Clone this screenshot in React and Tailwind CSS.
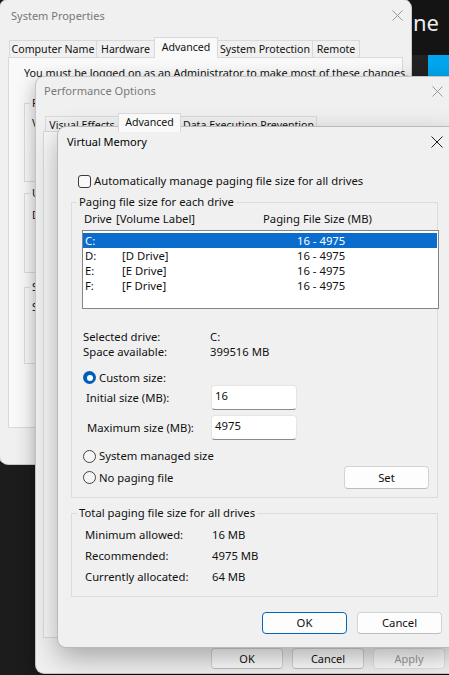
import React from "react";

const XIcon = ({ color = "#000", size = 12, sw = 1 }) => (
  <svg width={size} height={size} viewBox="0 0 12 12" className="shrink-0">
    <path d="M0.5 0.5 L11.5 11.5 M11.5 0.5 L0.5 11.5" stroke={color} strokeWidth={sw} fill="none" />
  </svg>
);

const Radio = ({ checked }) =>
  checked ? (
    <span className="w-[13px] h-[13px] rounded-full bg-[#005fb8] flex items-center justify-center shrink-0">
      <span className="w-[6px] h-[6px] rounded-full bg-white" />
    </span>
  ) : (
    <span className="w-[13px] h-[13px] rounded-full border border-[#444] bg-[#f5f5f5] shrink-0" />
  );

const Btn = ({ children, w = "w-[85px]", h = "h-[22px]", primary, disabled }) => {
  const cls = primary
    ? "border-[#0067c0]"
    : disabled
    ? "border-[#e2e2e2] text-[#9a9a9a] bg-[#f3f3f3]"
    : "border-[#d3d3d3] border-b-[#bdbdbd]";
  return (
    <div className={`${w} ${h} flex items-center justify-center rounded-[4px] border bg-[#fdfdfd] ${cls}`}>
      {children}
    </div>
  );
};

function SystemProperties() {
  const tabs = [
    ["Computer Name", "w-[88px]"],
    ["Hardware", "w-[59px]"],
    ["Advanced", "w-[64px]", true],
    ["System Protection", "w-[96px]"],
    ["Remote", "w-[48px]"],
  ];
  return (
    <div className="absolute left-0 top-0 w-[411px] h-[464px] bg-[#f0f0f0] rounded-[8px] shadow-[0_0_0_1px_#c9c9c9] overflow-hidden text-[10.8px]">
      <div className="h-[31px] flex items-center justify-between pl-[11px] pr-[8px] text-[#777]">
        <span className="text-[11px]">System Properties</span>
        <XIcon color="#8f8f8f" size={11} />
      </div>
      <div className="h-[26px] flex items-end pl-[10px] text-[10.6px]">
        {tabs.map(([t, w, sel]) =>
          sel ? (
            <div
              key={t}
              className={`${w} h-[21px] -ml-px -mb-px relative z-10 flex justify-center pt-[1px] border border-b-0 border-[#d9d9d9] bg-[#f9f9f9]`}
            >
              {t}
            </div>
          ) : (
            <div
              key={t}
              className={`${w} h-[17px] -ml-px flex justify-center items-start border border-b-0 border-[#d9d9d9] bg-[#f0f0f0] leading-[16px]`}
            >
              {t}
            </div>
          )
        )}
      </div>
      <div className="ml-[8px] w-[395px] h-[371px] border border-[#d9d9d9] bg-[#f9f9f9] pl-[15px] pt-[7px]">
        <div>You must be logged on as an Administrator to make most of these changes.</div>
        <fieldset className="mt-[14px] w-[364px] border border-[#dcdcdc] min-w-0">
          <legend className="ml-[5px] px-[2px]">Performance</legend>
          <div className="h-[70px] pl-[7px] pt-[4px]">Visual effects, processor scheduling, memory usage, and virtual memory</div>
        </fieldset>
        <fieldset className="mt-[3px] w-[364px] border border-[#dcdcdc] min-w-0">
          <legend className="ml-[5px] px-[2px]">User Profiles</legend>
          <div className="h-[71px] pl-[7px] pt-[6px]">Desktop settings related to your sign-in</div>
        </fieldset>
        <fieldset className="mt-[6px] w-[364px] border border-[#dcdcdc] min-w-0">
          <legend className="ml-[5px] px-[2px]">Startup and Recovery</legend>
          <div className="h-[68px] pl-[7px] pt-[4px]">System startup, system failure, and debugging information</div>
        </fieldset>
      </div>
    </div>
  );
}

function PerformanceOptions() {
  return (
    <div className="absolute left-[36px] top-[77px] w-[425px] h-[596px] bg-[#f0f0f0] rounded-[8px] shadow-[0_0_0_1px_#c4c4c4,0_6px_20px_rgba(0,0,0,0.35)] overflow-hidden">
      <div className="h-[28px] flex items-center justify-between pl-[8px] pr-[18px] text-[#7a7a7a]">
        <span className="text-[11.1px]">Performance Options</span>
        <XIcon color="#909090" size={11} />
      </div>
      <div className="h-[26px] flex items-end pl-[9px] text-[10.6px]">
        <div className="w-[74px] h-[15px] flex justify-center border border-b-0 border-[#d9d9d9] bg-[#f0f0f0] leading-[16px]">
          Visual Effects
        </div>
        <div className="w-[63px] h-[19px] -ml-px -mb-px relative z-10 flex justify-center border border-b-0 border-[#d9d9d9] bg-[#f9f9f9] leading-[16px]">
          Advanced
        </div>
        <div className="w-[137px] h-[15px] -ml-px flex justify-center border border-b-0 border-[#d9d9d9] bg-[#f0f0f0] leading-[16px]">
          Data Execution Prevention
        </div>
      </div>
      <div className="ml-[7px] w-[410px] h-[507px] border border-[#d9d9d9] bg-[#f7f7f7]" />
      <div className="mt-[10px] pl-[175px] flex gap-[9px] text-[11px]">
        <Btn w="w-[72px]" h="h-[21px]">OK</Btn>
        <Btn w="w-[72px]" h="h-[21px]">Cancel</Btn>
        <Btn w="w-[72px]" h="h-[21px]" disabled>Apply</Btn>
      </div>
    </div>
  );
}

const drives = [
  { d: "C:", l: "", s: "16 - 4975", sel: true },
  { d: "D:", l: "[D Drive]", s: "16 - 4975" },
  { d: "E:", l: "[E Drive]", s: "16 - 4975" },
  { d: "F:", l: "[F Drive]", s: "16 - 4975" },
];

function VirtualMemory() {
  return (
    <div className="absolute left-[58px] top-[127px] w-[400px] h-[520px] bg-[#f0f0f0] rounded-[8px] shadow-[0_0_0_1px_#b9b9b9,0_10px_28px_rgba(0,0,0,0.32)] overflow-hidden text-[11.3px]">
      <div className="h-[30px] flex items-center justify-between pl-[9px] pr-[15px] text-black">
        <span className="text-[11px]">Virtual Memory</span>
        <XIcon color="#1a1a1a" size={12} />
      </div>

      <div className="mt-[16px] h-[16px] pl-[20px] flex items-center gap-[3px]">
        <span className="w-[13px] h-[13px] rounded-[3px] border border-[#3a3a3a] bg-[#f8f8f8]" />
        <span>Automatically manage paging file size for all drives</span>
      </div>

      <fieldset className="mt-[5px] ml-[13px] w-[367px] min-w-0 border border-[#dcdcdc] pb-[8px]">
        <legend className="ml-[5px] px-[2px]">Paging file size for each drive</legend>
        <div className="mt-[1px] h-[16px] pl-[12px] flex items-center">
          <span className="w-[32px]">Drive</span>
          <span className="w-[147px]">[Volume Label]</span>
          <span>Paging File Size (MB)</span>
        </div>
        <div className="mt-[3px] ml-[10px] w-[357px] h-[79px] border border-[#858585] bg-white pt-[2px] pr-[1px]">
          {drives.map((r) => (
            <div
              key={r.d}
              className={
                r.sel
                  ? "h-[15px] flex items-center bg-[#0a6ccd] text-white"
                  : "h-[15px] flex items-center"
              }
            >
              <span className="w-[39px] pl-[2px]">{r.d}</span>
              <span className="w-[175px]">{r.l}</span>
              <span>{r.s}</span>
            </div>
          ))}
        </div>
        <div className="mt-[20px] h-[15px] pl-[11px] flex items-center">
          <span className="w-[127px]">Selected drive:</span>
          <span>C:</span>
        </div>
        <div className="h-[15px] pl-[11px] flex items-center">
          <span className="w-[127px]">Space available:</span>
          <span>399516 MB</span>
        </div>
        <div className="mt-[11px] h-[15px] pl-[11px] flex items-center gap-[3px]">
          <Radio checked />
          <span>Custom size:</span>
        </div>
        <div className="h-[25px] pl-[14px] flex items-center">
          <span className="w-[125px]">Initial size (MB):</span>
          <div className="w-[86px] h-[25px] bg-white border border-[#e5e5e5] border-b-[#8a8a8a] rounded-[4px] pl-[3px] pt-[2px] leading-[16px]">
            16
          </div>
        </div>
        <div className="mt-[5px] h-[25px] pl-[15px] flex items-center">
          <span className="w-[124px]">Maximum size (MB):</span>
          <div className="w-[86px] h-[25px] bg-white border border-[#e5e5e5] border-b-[#8a8a8a] rounded-[4px] pl-[3px] pt-[2px] leading-[16px]">
            4975
          </div>
        </div>
        <div className="mt-[8px] h-[16px] pl-[11px] flex items-center gap-[3px]">
          <Radio />
          <span>System managed size</span>
        </div>
        <div className="mt-[2px] h-[23px] pl-[11px] pr-[8px] flex items-center justify-between">
          <div className="flex items-center gap-[3px]">
            <Radio />
            <span>No paging file</span>
          </div>
          <Btn w="w-[85px]" h="h-[23px]">Set</Btn>
        </div>
      </fieldset>

      <fieldset className="mt-[7px] ml-[13px] w-[367px] min-w-0 border border-[#dcdcdc] pb-[9px]">
        <legend className="ml-[5px] px-[2px]">Total paging file size for all drives</legend>
        <div className="mt-[3px]">
          {[
            ["Minimum allowed:", "16 MB"],
            ["Recommended:", "4975 MB"],
            ["Currently allocated:", "64 MB"],
          ].map(([a, b]) => (
            <div key={a} className="h-[21px] pl-[13px] flex items-center">
              <span className="w-[127px]">{a}</span>
              <span>{b}</span>
            </div>
          ))}
        </div>
      </fieldset>

      <div className="mt-[15px] pl-[204px] flex gap-[10px]">
        <Btn primary>OK</Btn>
        <Btn>Cancel</Btn>
      </div>
    </div>
  );
}

export default function App() {
  return (
    <div className="relative w-[449px] h-[675px] overflow-hidden whitespace-nowrap bg-[#141414] font-['Noto_Sans',sans-serif] text-[11.5px] leading-[16px] text-[#111]">
      <div className="absolute left-0 top-[464px] w-[40px] h-[211px] bg-[#1c1c1c]" />
      <div className="absolute left-[413px] top-[7px] text-[22px] leading-[30px] text-[#ececec]">ne</div>
      <div className="absolute left-[411px] top-[55px] w-[38px] h-[22px] flex">
        <div className="w-[17px] h-full bg-[#222]" />
        <div className="flex-1 h-full bg-[#00a6ed]" />
      </div>
      <SystemProperties />
      <PerformanceOptions />
      <VirtualMemory />
    </div>
  );
}
